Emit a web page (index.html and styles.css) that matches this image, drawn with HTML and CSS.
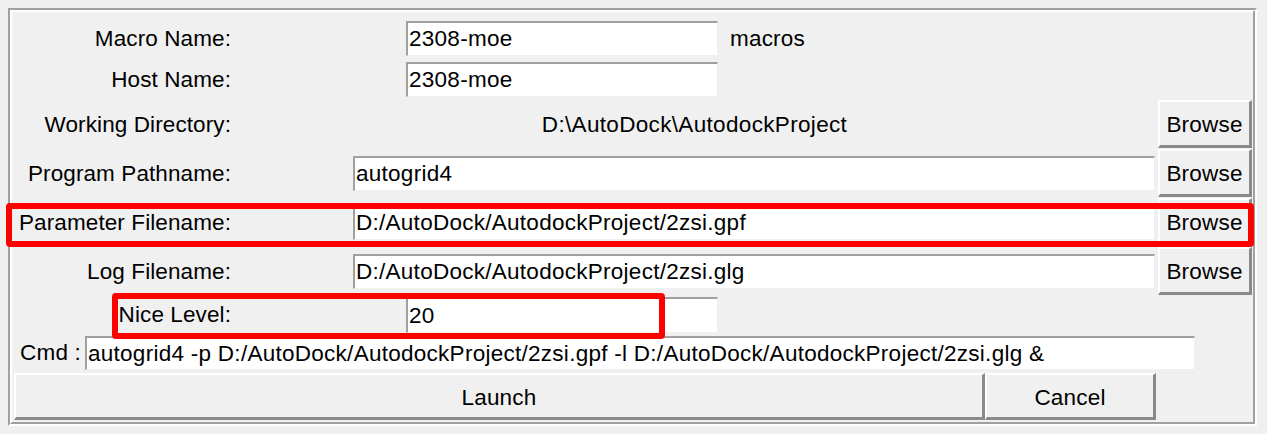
FILE: index.html
```html
<!DOCTYPE html>
<html>
<head>
<meta charset="utf-8">
<title>AutoGrid Launch</title>
<link rel="stylesheet" href="styles.css">
</head>
<body>
<div class="frame">
  <div class="frame-inner">
    <div class="row row-short">
      <div class="label">Macro Name:</div>
      <div class="cell">
        <div class="entry entry-small">2308-moe</div>
        <span class="suffix">macros</span>
      </div>
      <div></div>
    </div>
    <div class="row row-short">
      <div class="label">Host Name:</div>
      <div class="cell">
        <div class="entry entry-small">2308-moe</div>
      </div>
      <div></div>
    </div>
    <div class="row row-tall">
      <div class="label">Working Directory:</div>
      <div class="cell cell-center value">D:\AutoDock\AutodockProject</div>
      <button class="btn btn-browse">Browse</button>
    </div>
    <div class="row row-tall">
      <div class="label">Program Pathname:</div>
      <div class="cell">
        <div class="entry entry-wide">autogrid4</div>
      </div>
      <button class="btn btn-browse">Browse</button>
    </div>
    <div class="row row-tall">
      <div class="label">Parameter Filename:</div>
      <div class="cell">
        <div class="entry entry-wide">D:/AutoDock/AutodockProject/2zsi.gpf</div>
      </div>
      <button class="btn btn-browse">Browse</button>
    </div>
    <div class="row row-tall">
      <div class="label">Log Filename:</div>
      <div class="cell">
        <div class="entry entry-wide">D:/AutoDock/AutodockProject/2zsi.glg</div>
      </div>
      <button class="btn btn-browse">Browse</button>
    </div>
    <div class="row row-mid">
      <div class="label">Nice Level:</div>
      <div class="cell">
        <div class="entry entry-small entry-nice">20</div>
      </div>
      <div></div>
    </div>
    <div class="cmd-row">
      <span class="cmd-label">Cmd :</span>
      <div class="entry entry-cmd">autogrid4 -p D:/AutoDock/AutodockProject/2zsi.gpf -l D:/AutoDock/AutodockProject/2zsi.glg &amp;</div>
    </div>
    <div class="actions">
      <button class="btn btn-launch">Launch</button>
      <button class="btn btn-cancel">Cancel</button>
    </div>
  </div>
</div>
<div class="highlight highlight-param"></div>
<div class="highlight highlight-nice"></div>
</body>
</html>
```
FILE: styles.css
```css
* { box-sizing: border-box; }
html, body {
  margin: 0;
  padding: 0;
  background: #f0f0f0;
}
body {
  width: 1267px;
  height: 434px;
  position: relative;
  overflow: hidden;
  font-family: "Liberation Sans", Arial, sans-serif;
  font-size: 22.5px;
  color: #000;
}
.frame {
  margin: 8px 0 0 8px;
  width: 1249px;
  height: 418px;
  border: 2px solid;
  border-color: #a0a0a0 #ffffff #ffffff #a0a0a0;
}
.frame-inner {
  width: 100%;
  height: 100%;
  border: 2px solid;
  border-color: #ffffff #a0a0a0 #a0a0a0 #ffffff;
  padding-top: 6px;
}
.row {
  display: grid;
  grid-template-columns: 219px 927px 95px;
  align-items: center;
}
.row-short { height: 41px; }
.row-tall { height: 49px; }
.row-mid { height: 38px; }
.label {
  text-align: right;
  white-space: nowrap;
  letter-spacing: 0.1px;
}
.cell {
  display: flex;
  align-items: center;
  height: 100%;
}
.cell-center {
  justify-content: center;
}
.value {
  letter-spacing: 0.33px;
}
.entry {
  height: 35px;
  background: #fff;
  border-style: solid;
  border-width: 2px 1px 1px 2px;
  border-color: #a0a0a0 #f0f0f0 #f0f0f0 #a0a0a0;
  padding-left: 1px;
  display: flex;
  align-items: center;
  white-space: nowrap;
  overflow: hidden;
  letter-spacing: 0.27px;
}
.entry-small {
  margin-left: 175px;
  width: 312px;
}
.entry-nice {
  height: 36px;
}
.entry-wide {
  margin-left: 122px;
  width: 802px;
}
.suffix {
  margin-left: 12px;
  letter-spacing: 0.2px;
}
.btn {
  font-family: inherit;
  font-size: 22.5px;
  color: #000;
  background: #f0f0f0;
  border-style: solid;
  border-width: 2px 3px 3px 2px;
  border-color: #ffffff #8a8a8a #8a8a8a #ffffff;
  padding: 0;
  margin: 0;
  letter-spacing: 0.2px;
}
.btn-browse {
  width: 94px;
  height: 48px;
  align-self: start;
  padding-top: 2px;
}
.cmd-row {
  height: 38px;
  display: flex;
  align-items: center;
  padding-left: 8px;
}
.cmd-label {
  width: 65px;
  white-space: nowrap;
  letter-spacing: 0.2px;
}
.entry-cmd {
  width: 1110px;
  height: 34px;
}
.actions {
  display: flex;
  margin-top: 1px;
  padding-left: 2px;
}
.btn-launch {
  width: 971px;
  height: 47px;
  padding-top: 4px;
}
.btn-cancel {
  width: 171px;
  height: 47px;
  padding-top: 4px;
}
.highlight {
  position: absolute;
  border: 6px solid #ff0000;
  border-radius: 4px;
  pointer-events: none;
}
.highlight-param {
  left: 6px;
  top: 203px;
  width: 1248px;
  height: 44px;
}
.highlight-nice {
  left: 112px;
  top: 293px;
  width: 553px;
  height: 46px;
}
```
